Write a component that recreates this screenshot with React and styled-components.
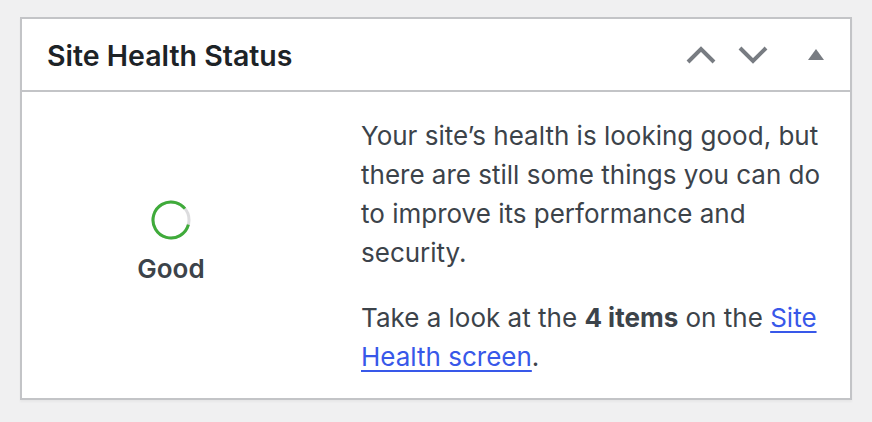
import styled, { createGlobalStyle } from "styled-components";

const GlobalStyle = createGlobalStyle`
  body {
    margin: 0;
    background: #f0f0f1;
    font-family: Inter, "Noto Sans", "DejaVu Sans", sans-serif;
    color: #3c434a;
  }
`;

const Page = styled.div`
  padding: 17px 20px 20px 20px;
`;

const Postbox = styled.section`
  width: 832px;
  box-sizing: border-box;
  background: #fff;
  border: 2px solid #c3c4c7;
  box-shadow: 0 2px 2px rgba(0, 0, 0, 0.04);
`;

const Header = styled.div`
  height: 71px;
  display: flex;
  align-items: center;
  justify-content: space-between;
  border-bottom: 2px solid #c3c4c7;
  padding-left: 25px;
`;

const Title = styled.h2`
  margin: 2px 0 0 0;
  font-size: 28.5px;
  font-weight: 600;
  color: #1d2327;
`;

const Handles = styled.div`
  display: flex;
  align-items: center;
  height: 100%;
  padding-right: 10px;
`;

const HandleButton = styled.button`
  width: 48px;
  height: 100%;
  margin-left: ${(p) => p.$space || 0}px;
  border: 0;
  background: none;
  padding: 0;
  display: flex;
  align-items: center;
  justify-content: center;
  color: #787c82;
  cursor: pointer;
`;

const Body = styled.div`
  display: grid;
  grid-template-columns: 250px 1fr;
  column-gap: 65px;
  align-items: center;
  padding: 24px 24px 22px 24px;
`;

const Score = styled.div`
  display: flex;
  flex-direction: column;
  align-items: center;
  gap: 13px;
  margin-top: -8px;
`;

const ScoreLabel = styled.div`
  font-size: 26px;
  font-weight: 600;
  color: #3c434a;
`;

const Summary = styled.div`
  font-size: 26px;
  line-height: 39px;
`;

const Para = styled.p`
  margin: 0;
  & + & {
    margin-top: 26px;
  }
`;

const Link = styled.a`
  color: #3858e9;
  text-decoration: underline;
  text-underline-offset: 4px;
  text-decoration-thickness: 2px;
`;

const Chevron = ({ up }) => (
  <svg width="30" height="18" viewBox="0 0 30 18" fill="none">
    <polyline
      points={up ? "2,16 15,3 28,16" : "2,2 15,15 28,2"}
      stroke="currentColor"
      strokeWidth="4"
    />
  </svg>
);

const Triangle = () => (
  <svg width="16" height="11" viewBox="0 0 16 11">
    <polygon points="8,0 16,11 0,11" fill="currentColor" />
  </svg>
);

const ProgressRing = () => {
  const r = 18;
  const c = 2 * Math.PI * r;
  const gray = (56 / 360) * c;
  return (
    <svg width="40" height="40" viewBox="0 0 40 40">
      <circle cx="20" cy="20" r={r} fill="none" stroke="#dcdcde" strokeWidth="3" />
      <circle
        cx="20"
        cy="20"
        r={r}
        fill="none"
        stroke="#3fab3a"
        strokeWidth="3"
        strokeDasharray={`${c - gray} ${c}`}
        transform="rotate(15 20 20)"
      />
    </svg>
  );
};

export default function App() {
  return (
    <>
      <GlobalStyle />
      <Page>
        <Postbox>
          <Header>
            <Title>Site Health Status</Title>
            <Handles>
              <HandleButton aria-label="Move up">
                <Chevron up />
              </HandleButton>
              <HandleButton $space={4} aria-label="Move down">
                <Chevron />
              </HandleButton>
              <HandleButton $space={15} aria-label="Toggle panel">
                <Triangle />
              </HandleButton>
            </Handles>
          </Header>
          <Body>
            <Score>
              <ProgressRing />
              <ScoreLabel>Good</ScoreLabel>
            </Score>
            <Summary>
              <Para>
                Your site’s health is looking good, but there are still some
                things you can do to improve its performance and security.
              </Para>
              <Para>
                Take a look at the <strong>4 items</strong> on the{" "}
                <Link href="#">Site Health screen</Link>.
              </Para>
            </Summary>
          </Body>
        </Postbox>
      </Page>
    </>
  );
}
